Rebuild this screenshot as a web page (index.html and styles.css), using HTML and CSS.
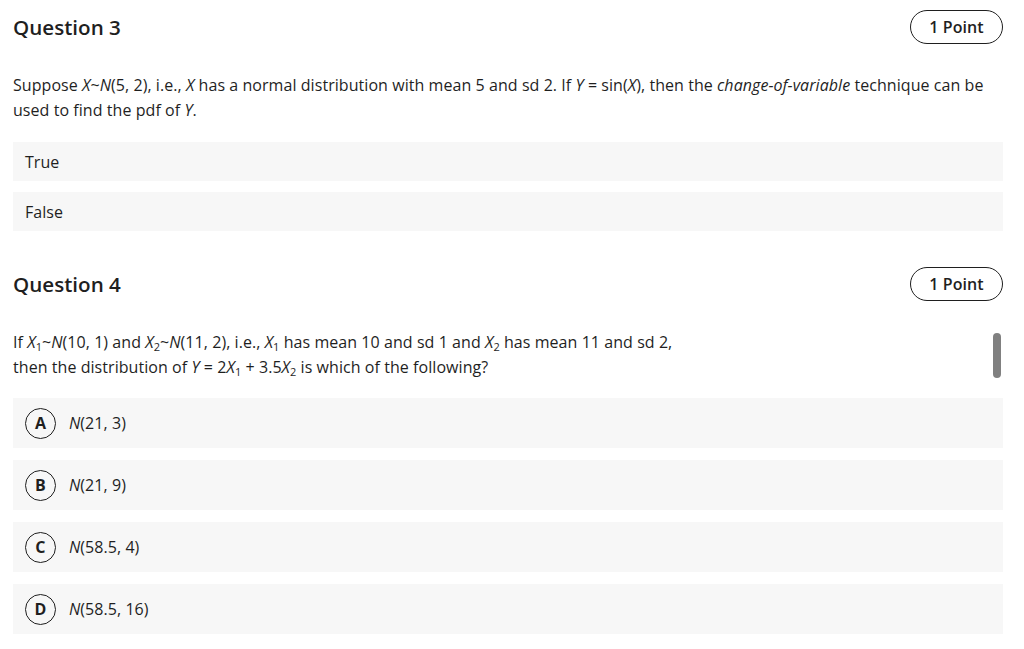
FILE: index.html
```html
<!DOCTYPE html>
<html>
<head>
<meta charset="utf-8">
<link rel="stylesheet" href="styles.css">
</head>
<body>
<div class="page">
  <section class="question q3">
    <div class="q-head">
      <h2 class="q-title">Question 3</h2>
      <span class="points">1 Point</span>
    </div>
    <p class="prompt">Suppose <i>X</i>~<i>N</i>(5, 2), i.e., <i>X</i> has a normal distribution with mean 5 and sd 2. If <i>Y</i> = sin(<i>X</i>), then the <i>change-of-variable</i> technique can be used to find the pdf of <i>Y</i>.</p>
    <div class="options tf">
      <div class="opt">True</div>
      <div class="opt">False</div>
    </div>
  </section>

  <section class="question q4">
    <div class="q-head">
      <h2 class="q-title">Question 4</h2>
      <span class="points">1 Point</span>
    </div>
    <div class="prompt-wrap">
      <p class="prompt">If <i>X</i><sub>1</sub>~<i>N</i>(10, 1) and <i>X</i><sub>2</sub>~<i>N</i>(11, 2), i.e., <i>X</i><sub>1</sub> has mean 10 and sd 1 and <i>X</i><sub>2</sub> has mean 11 and sd 2,<br>then the distribution of <i>Y</i> = 2<i>X</i><sub>1</sub> + 3.5<i>X</i><sub>2</sub> is which of the following?</p>
      <div class="scroll-thumb"></div>
    </div>
    <div class="options mc">
      <div class="opt"><span class="letter">A</span><span class="ans"><i>N</i>(21, 3)</span></div>
      <div class="opt"><span class="letter">B</span><span class="ans"><i>N</i>(21, 9)</span></div>
      <div class="opt"><span class="letter">C</span><span class="ans"><i>N</i>(58.5, 4)</span></div>
      <div class="opt"><span class="letter">D</span><span class="ans"><i>N</i>(58.5, 16)</span></div>
    </div>
  </section>
</div>
</body>
</html>
```
FILE: styles.css
```css
html, body {
  margin: 0;
  padding: 0;
  background: #ffffff;
}
body {
  font-family: "Open Sans", "Liberation Sans", sans-serif;
  color: #1f1f1f;
  font-size: 16px;
  letter-spacing: 0.06px;
}
.page {
  padding: 10px 21px 0 13px;
}
.q-head {
  display: flex;
  justify-content: space-between;
  align-items: center;
  height: 34px;
}
.q-title {
  margin: 0;
  font-size: 20.6px;
  font-weight: 600;
  line-height: 28px;
  letter-spacing: 0;
  color: #1f1f1f;
}
.points {
  box-sizing: border-box;
  height: 34px;
  width: 93px;
  border: 1px solid #1f1f1f;
  border-radius: 17px;
  display: flex;
  align-items: center;
  justify-content: center;
  font-size: 16px;
  font-weight: 600;
}
.prompt {
  margin: 0;
  line-height: 25px;
}
.q3 .prompt {
  margin-top: 29px;
}
.prompt sub {
  font-size: 11px;
  line-height: 0;
  vertical-align: -3px;
}
.options {
  display: flex;
  flex-direction: column;
}
.tf {
  margin-top: 19px;
  gap: 11px;
}
.opt {
  background: #f7f7f7;
  display: flex;
  align-items: center;
  padding-left: 12px;
}
.tf .opt {
  height: 39px;
}
.q4 {
  margin-top: 36px;
}
.prompt-wrap {
  position: relative;
  margin-top: 29px;
}
.scroll-thumb {
  position: absolute;
  right: 2px;
  top: 3px;
  width: 8px;
  height: 45px;
  border-radius: 4px;
  background: #808080;
}
.mc {
  margin-top: 18px;
  gap: 12px;
}
.mc .opt {
  height: 50px;
}
.letter {
  box-sizing: border-box;
  flex-shrink: 0;
  width: 31px;
  height: 31px;
  border: 1.5px solid #1f1f1f;
  border-radius: 50%;
  display: flex;
  align-items: center;
  justify-content: center;
  font-weight: 700;
  font-size: 16px;
}
.ans {
  margin-left: 13px;
}
```
